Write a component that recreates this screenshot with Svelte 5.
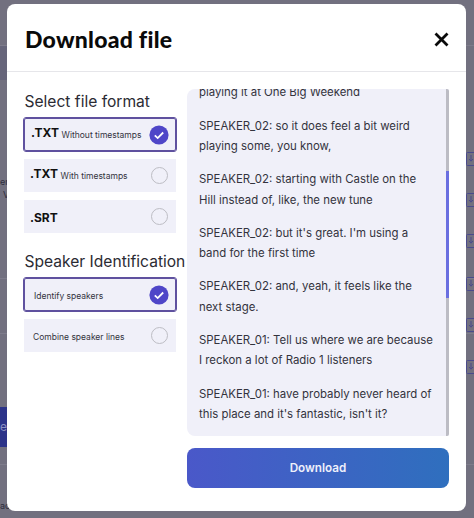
<script>
  const lines = [
    ["SPEAKER_02: so it does feel a bit weird", "playing some, you know,"],
    ["SPEAKER_02: starting with Castle on the", "Hill instead of, like, the new tune"],
    ["SPEAKER_02: but it's great. I'm using a", "band for the first time"],
    ["SPEAKER_02: and, yeah, it feels like the", "next stage."],
    ["SPEAKER_01: Tell us where we are because", "I reckon a lot of Radio 1 listeners"],
    ["SPEAKER_01: have probably never heard of", "this place and it's fantastic, isn't it?"]
  ];
  const icons = [152, 193, 234, 277, 318, 360];
</script>

<div class="page">
  <div class="behind">
    <div class="band"></div>
    <div class="rule r1"></div>
    <div class="rule r2"></div>
    <div class="rule r3"></div>
    <div class="rule r4"></div>
    <div class="cta">e</div>
    <span class="frag f1">er</span>
    <span class="frag f2">V</span>
    <span class="frag f3">ad</span>
    {#each icons as y}
      <svg class="bg-icon" style="top:{y}px" width="10" height="14" viewBox="0 0 10 14" fill="none">
        <path d="M10 .5H1.5A1 1 0 0 0 .5 1.5v11a1 1 0 0 0 1 1H10" stroke="#4a4a8c"/>
        <path d="M5 3v6M3 7l2 2.2L7 7" stroke="#4a4a8c"/>
      </svg>
    {/each}
  </div>

  <div class="modal">
    <header>
      <h1>Download file</h1>
      <svg class="close" width="15" height="15" viewBox="0 0 15 15" fill="none" aria-label="Close">
        <path d="M1.5 1.5l12 12M13.5 1.5l-12 12" stroke="#0a0a0a" stroke-width="2.8"/>
      </svg>
    </header>

    <div class="content">
      <aside>
        <h2>Select file format</h2>
        <div class="options">
          <div class="opt on">
            <span class="label pair"><b>.TXT</b><small class="ts">Without timestamps</small></span>
            <svg class="check" width="20" height="20" viewBox="0 0 20 20"><circle cx="10" cy="10" r="9.6" fill="#4f46c8"/><path d="M5.8 10.3l2.9 2.8 5.5-5.6" fill="none" stroke="#fff" stroke-width="1.8"/></svg>
          </div>
          <div class="opt">
            <span class="label pair"><b>.TXT</b><small class="ts">With timestamps</small></span>
            <span class="radio"></span>
          </div>
          <div class="opt">
            <span class="label"><b>.SRT</b></span>
            <span class="radio"></span>
          </div>
        </div>

        <h2 class="second">Speaker Identification</h2>
        <div class="options">
          <div class="opt on wide">
            <span class="label"><small>Identify speakers</small></span>
            <svg class="check" width="20" height="20" viewBox="0 0 20 20"><circle cx="10" cy="10" r="9.6" fill="#4f46c8"/><path d="M5.8 10.3l2.9 2.8 5.5-5.6" fill="none" stroke="#fff" stroke-width="1.8"/></svg>
          </div>
          <div class="opt wide">
            <span class="label"><small>Combine speaker lines</small></span>
            <span class="radio"></span>
          </div>
        </div>
      </aside>

      <section>
        <div class="transcript">
          <div class="scroll">
            <p>playing it at One Big Weekend</p>
            {#each lines as para}
              <p>{para[0]}<br />{para[1]}</p>
            {/each}
          </div>
          <div class="track"><div class="thumb"></div></div>
        </div>
        <button>Download</button>
      </section>
    </div>
  </div>
</div>

<style>
  :global(body) { margin: 0; }
  .page {
    position: relative;
    width: 474px;
    height: 518px;
    overflow: hidden;
    background: #72707f;
    font-family: Inter, "Noto Sans", sans-serif;
  }
  .behind { position: absolute; inset: 0; }
  .band { position: absolute; left: 0; top: 45px; width: 7px; height: 35px; background: #66657a; }
  .rule { position: absolute; left: 0; right: 0; height: 1px; background: #7e7c8b; }
  .r1 { top: 45px; }
  .r2 { top: 278px; }
  .r3 { top: 333px; }
  .r4 { top: 464px; }
  .cta {
    position: absolute; left: 0; top: 407px; width: 20px; height: 40px;
    background: #2c3389; color: #8a8fc0; font-size: 12px; line-height: 40px;
  }
  .frag { position: absolute; font-size: 9px; color: #2d2c3c; }
  .f1 { left: 0; top: 176px; }
  .f2 { left: 3px; top: 189px; }
  .f3 { left: 0; top: 500px; }
  .bg-icon { position: absolute; left: 466px; }

  .modal {
    position: absolute;
    left: 7px; top: 4px;
    width: 459px; height: 507px;
    background: #fff;
    border-radius: 8px;
    display: flex;
    flex-direction: column;
  }
  header {
    height: 68px;
    flex: none;
    box-sizing: border-box;
    border-bottom: 1px solid #e6e6ea;
    display: flex;
    align-items: center;
    justify-content: space-between;
    padding: 4px 17px 0 18px;
  }
  h1 { margin: 0; font: 900 23px/1 Lato, sans-serif; color: #0a0a0a; letter-spacing: 0.25px; }
  .close { display: block; }

  .content {
    flex: 1;
    display: flex;
    gap: 11px;
    padding: 17px 17px 23px 17px;
    min-height: 0;
  }
  aside { width: 152px; flex: none; padding-top: 3px; }
  h2 {
    margin: 0 0 6px 0.5px;
    font-size: 15.6px;
    line-height: 20px;
    font-weight: 400;
    color: #2b2b33;
    white-space: nowrap;
  }
  h2.second { margin-top: 19px; }
  .options { display: flex; flex-direction: column; gap: 8px; width: 152px; }
  .opt {
    box-sizing: border-box;
    height: 33px;
    background: #f0f0f9;
    display: flex;
    align-items: center;
    justify-content: space-between;
    padding: 0 8px 0 6px;
  }
  .opt.wide { padding-left: 9px; }
  .opt.on {
    border: 1px solid #5f519f;
    border-radius: 2px;
    outline: 0.5px solid #5f519f;
    padding-right: 6px;
  }
  .label { color: #111; display: block; white-space: nowrap; line-height: 12px; }
  .label.pair { margin-bottom: 4px; }
  b { font-size: 12px; font-weight: 700; }
  small { font-size: 8.5px; color: #33333d; }
  small.ts { margin-left: 2.5px; vertical-align: -1px; }
  .radio {
    box-sizing: border-box;
    width: 17px; height: 17px;
    border-radius: 50%;
    border: 1.3px solid #bdbdc4;
    margin-right: 0.5px;
  }
  .check { display: block; flex: none; }

  section { flex: 1; min-width: 0; display: flex; flex-direction: column; gap: 12px; }
  .transcript {
    position: relative;
    flex: 1;
    min-height: 0;
    background: #f0f0f9;
    border-radius: 8px 2px 2px 8px;
    overflow: hidden;
  }
  .scroll { margin-top: -6.7px; padding: 0 12px; }
  p {
    margin: 0 0 13px;
    font-size: 11.4px;
    line-height: 20.3px;
    color: #33333d;
    white-space: nowrap;
  }
  .track { position: absolute; right: 0; top: 0; bottom: 0; width: 3px; background: #bcbcc4; }
  .thumb { position: absolute; left: 0; right: 0; top: 82px; height: 127px; background: #6a6fe0; }
  button {
    height: 40px;
    flex: none;
    border: 0;
    border-radius: 8px;
    background: linear-gradient(90deg, #4a58c9, #2f6fbe);
    color: #eef0fb;
    font: 600 11.7px Inter, sans-serif;
  }
</style>
